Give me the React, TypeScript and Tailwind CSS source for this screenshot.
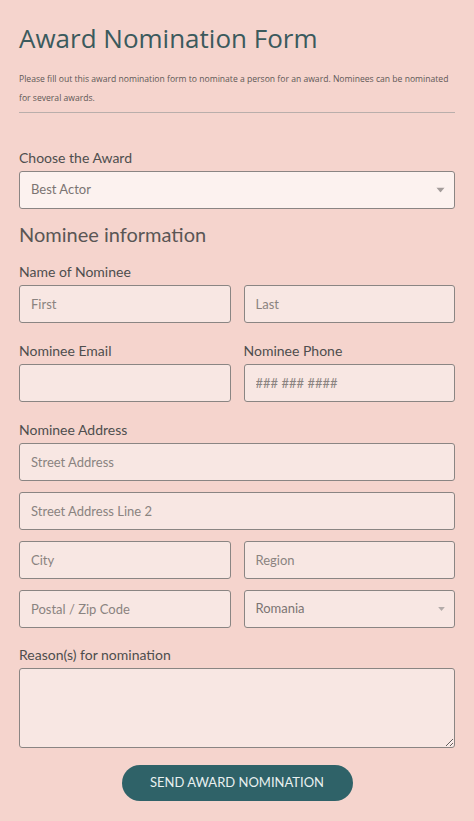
import React from "react";

const inputCls =
  "h-[38px] w-full rounded-[3px] border border-[#8a8583] bg-[#f8e7e3] px-[11px] text-[13px] text-[#7b7472] placeholder:text-[#8a8380] outline-none font-['Lato',sans-serif]";

function Label({ children }: { children: React.ReactNode }) {
  return (
    <div className="text-[14px] leading-[18px] text-[#4e4e4e] font-['Lato',sans-serif] mb-[4px]">
      {children}
    </div>
  );
}

function Caret({ light }: { light?: boolean }) {
  return (
    <svg
      width={light ? 7 : 9}
      height={light ? 4 : 5}
      viewBox="0 0 10 6"
      className="absolute right-[10px] top-1/2 -translate-y-1/2"
    >
      <path d="M0 0 L10 0 L5 6 Z" fill={light ? "#b3aba9" : "#a39c9a"} />
    </svg>
  );
}

export default function App() {
  return (
    <div className="min-h-[821px] w-[474px] bg-[#f5d4cd] px-[19px] pt-[21px] pb-[20px]">
      <h1 className="text-[26px] leading-[34px] text-[#3b5a5d] font-['Open_Sans',sans-serif] font-normal">
        Award Nomination Form
      </h1>
      <p className="mt-[15px] text-[8.6px] leading-[19px] text-[#5e5856] font-['Open_Sans',sans-serif]">
        Please fill out this award nomination form to nominate a person for an award. Nominees can be nominated for several awards.
      </p>
      <div className="mt-[4px] h-px bg-[#b9aeab]" />

      <div className="mt-[36px]">
        <Label>Choose the Award</Label>
        <div className="relative">
          <div className={inputCls + " bg-[#fcf2ef] flex items-center text-[#6f6967]"}>Best Actor</div>
          <Caret />
        </div>
      </div>

      <h2 className="mt-[12px] text-[20px] leading-[26px] text-[#5a5655] font-['Lato',sans-serif] font-normal">
        Nominee information
      </h2>

      <div className="mt-[16px]">
        <Label>Name of Nominee</Label>
        <div className="grid grid-cols-2 gap-[13px]">
          <input className={inputCls} placeholder="First" />
          <input className={inputCls} placeholder="Last" />
        </div>
      </div>

      <div className="mt-[19px] grid grid-cols-2 gap-[13px]">
        <div>
          <Label>Nominee Email</Label>
          <input className={inputCls} />
        </div>
        <div>
          <Label>Nominee Phone</Label>
          <input className={inputCls} placeholder="### ### ####" />
        </div>
      </div>

      <div className="mt-[19px]">
        <Label>Nominee Address</Label>
        <div className="flex flex-col gap-[11px]">
          <input className={inputCls} placeholder="Street Address" />
          <input className={inputCls} placeholder="Street Address Line 2" />
          <div className="grid grid-cols-2 gap-[13px]">
            <input className={inputCls} placeholder="City" />
            <input className={inputCls} placeholder="Region" />
          </div>
          <div className="grid grid-cols-2 gap-[13px]">
            <input className={inputCls} placeholder="Postal / Zip Code" />
            <div className="relative">
              <div className={inputCls + " flex items-center"}>Romania</div>
              <Caret light />
            </div>
          </div>
        </div>
      </div>

      <div className="mt-[18px]">
        <Label>Reason(s) for nomination</Label>
        <textarea className={inputCls + " h-[80px] block resize-y py-2"} />
      </div>

      <div className="mt-[17px] flex justify-center">
        <button className="h-[36px] w-[231px] rounded-full bg-[#2f6268] text-[13px] text-[#e8f0f0] font-['Lato',sans-serif]">
          SEND AWARD NOMINATION
        </button>
      </div>
    </div>
  );
}
